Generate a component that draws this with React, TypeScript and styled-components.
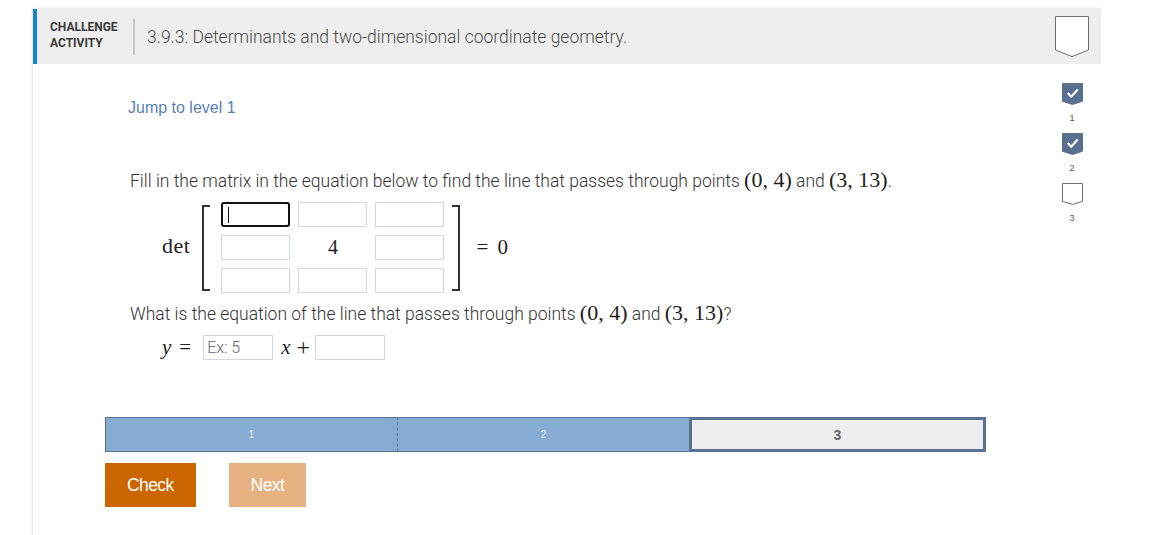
import React from "react";
import styled, { createGlobalStyle } from "styled-components";

const GlobalStyle = createGlobalStyle`
  html, body {
    margin: 0;
    padding: 0;
    background: #fff;
    font-family: Roboto, "Liberation Sans", sans-serif;
  }
`;

const Page = styled.div`
  padding: 9px 0 0 33px;
  width: 1068px;
  height: 526px;
  overflow: hidden;
`;

const Card = styled.div`
  background: #fff;
  box-shadow: 0 0 3px rgba(0, 0, 0, 0.18);
  min-height: 540px;
`;

const Header = styled.div`
  display: flex;
  align-items: center;
  height: 55px;
  background: #eeeeee;
  border-left: 4px solid #1784d0;
  padding-right: 12px;
`;

const Label = styled.div`
  font-family: Roboto, sans-serif;
  font-weight: 700;
  font-size: 12px;
  line-height: 16px;
  color: #3a3a3a;
  padding: 0 13px 4px;
  width: 70px;
  text-transform: uppercase;
`;

const Divider = styled.div`
  width: 2px;
  height: 36px;
  background: #c6c6c6;
`;

const Title = styled.div`
  flex: 1;
  font-weight: 300;
  font-size: 17.5px;
  color: #4a4a4a;
  padding-left: 12px;
`;

const Body = styled.div`
  display: flex;
`;

const Main = styled.div`
  flex: 1;
  padding-left: 72px;
`;

const Side = styled.div`
  width: 58px;
  display: flex;
  flex-direction: column;
  align-items: center;
  padding-top: 19px;
`;

const LevelItem = styled.div`
  display: flex;
  flex-direction: column;
  align-items: center;
  height: 50px;
`;

const LevelNum = styled.span`
  font-family: "Liberation Sans", Arial, sans-serif;
  font-size: 9px;
  color: #555;
  margin-top: 8px;
`;

const JumpLink = styled.div`
  font-family: "Liberation Sans", Arial, sans-serif;
  font-size: 16px;
  color: #5b7fb5;
  margin: 35px 0 0 23px;
`;

const Question = styled.p`
  font-weight: 300;
  font-size: 17.5px;
  line-height: 24px;
  color: #333;
  margin: 51px 0 0 25px;
`;

const Math = styled.span<{ $size?: number }>`
  font-family: "Liberation Serif", "DejaVu Serif", serif;
  font-size: ${(p) => p.$size ?? 22}px;
  color: #222;
`;

const MatrixRow = styled.div`
  display: flex;
  align-items: center;
  margin: 9px 0 0 57px;
`;

const Det = styled(Math)`
  margin-right: 12px;
  margin-top: -4px;
  letter-spacing: 0.5px;
`;

const Bracket = styled.div<{ $side: "left" | "right" }>`
  width: 6px;
  height: 82px;
  border: 2px solid #333;
  ${(p) => (p.$side === "left" ? "border-right: none;" : "border-left: none;")}
`;

const Grid = styled.div`
  display: grid;
  grid-template-columns: repeat(3, 69px);
  grid-auto-rows: 25px;
  column-gap: 8px;
  row-gap: 8px;
  margin: 0 8px 0 11px;
`;

const Cell = styled.div<{ $focus?: boolean }>`
  box-sizing: border-box;
  border: ${(p) => (p.$focus ? "2px solid #111" : "1px solid #cfd8de")};
  border-radius: ${(p) => (p.$focus ? "3px" : "0")};
  position: relative;
`;

const Caret = styled.span`
  position: absolute;
  left: 5px;
  top: 3px;
  width: 1px;
  height: 16px;
  background: #111;
`;

const Fixed = styled(Math)`
  display: flex;
  align-items: center;
  justify-content: center;
  font-size: 20px;
`;

const Equals = styled(Math)`
  margin-left: 16px;
  font-size: 21px;
  word-spacing: 4px;
`;

const Question2 = styled(Question)`
  margin-top: 8px;
`;

const AnswerRow = styled.div`
  display: flex;
  align-items: center;
  margin: 8px 0 0 57px;
`;

const Answer = styled.div`
  box-sizing: border-box;
  width: 70px;
  height: 25px;
  border: 1px solid #cfd8de;
  font-weight: 300;
  font-size: 16px;
  color: #666;
  padding: 2px 0 0 3px;
`;

const Op = styled(Math)<{ $l: number; $r: number }>`
  margin: 0 ${(p) => p.$r}px 0 ${(p) => p.$l}px;
`;

const OpVar = styled(Op)`
  font-style: italic;
`;

const Progress = styled.div`
  display: flex;
  width: 881px;
  height: 35px;
  margin-top: 56px;
`;

const Segment = styled.div<{ $done?: boolean; $first?: boolean }>`
  box-sizing: border-box;
  flex: 1;
  display: flex;
  align-items: center;
  justify-content: center;
  background: ${(p) => (p.$done ? "#87acd3" : "#eeeeee")};
  border: ${(p) => (p.$done ? "1px solid #5a7194" : "3px solid #5a7194")};
  border-left: ${(p) =>
    p.$done ? (p.$first ? "1px solid #5a7194" : "1px dashed #5a7194") : "3px solid #5a7194"};
  font-family: "Liberation Sans", Arial, sans-serif;
  font-size: ${(p) => (p.$done ? "10px" : "14px")};
  font-weight: ${(p) => (p.$done ? 400 : 700)};
  color: ${(p) => (p.$done ? "#e8eef6" : "#666")};
  ${(p) => (p.$done ? "border-right: none;" : "")}
`;

const Buttons = styled.div`
  display: flex;
  gap: 33px;
  margin-top: 11px;
`;

const Button = styled.div<{ $disabled?: boolean }>`
  height: 44px;
  padding: 0 22px;
  display: flex;
  align-items: center;
  background: ${(p) => (p.$disabled ? "#e6b281" : "#cc6600")};
  color: #fff;
  font-family: "Liberation Sans", Arial, sans-serif;
  font-size: 17.5px;
  letter-spacing: -0.6px;
`;

const Shield = ({ w, h, filled }: { w: number; h: number; filled?: boolean }) => (
  <svg width={w} height={h} viewBox={`0 0 ${w} ${h}`}>
    <path
      d={`M0.5 0.5 H${w - 0.5} V${h - h * 0.17} L${w / 2} ${h - 0.5} L0.5 ${h - h * 0.17} Z`}
      fill={filled ? "#596f90" : "#fff"}
      stroke={filled ? "#596f90" : "#6f6f6f"}
      strokeWidth={1}
    />
    {filled && (
      <path
        d={`M${w * 0.27} ${h * 0.45} L${w * 0.44} ${h * 0.62} L${w * 0.75} ${h * 0.3}`}
        fill="none"
        stroke="#fff"
        strokeWidth={2.2}
      />
    )}
  </svg>
);

const levels = [
  { n: 1, done: true },
  { n: 2, done: true },
  { n: 3, done: false },
];

export default function App() {
  return (
    <Page>
      <GlobalStyle />
      <Card>
        <Header>
          <Label>
            Challenge
            <br />
            Activity
          </Label>
          <Divider />
          <Title>3.9.3: Determinants and two-dimensional coordinate geometry.</Title>
          <Shield w={34} h={41} />
        </Header>
        <Body>
          <Main>
            <JumpLink>Jump to level 1</JumpLink>
            <Question>
              Fill in the matrix in the equation below to find the line that passes through points{" "}
              <Math>(0, 4)</Math> and <Math>(3, 13)</Math>.
            </Question>
            <MatrixRow>
              <Det>det</Det>
              <Bracket $side="left" />
              <Grid>
                <Cell $focus>
                  <Caret />
                </Cell>
                <Cell />
                <Cell />
                <Cell />
                <Fixed>4</Fixed>
                <Cell />
                <Cell />
                <Cell />
                <Cell />
              </Grid>
              <Bracket $side="right" />
              <Equals>= 0</Equals>
            </MatrixRow>
            <Question2>
              What is the equation of the line that passes through points <Math>(0, 4)</Math> and{" "}
              <Math>(3, 13)</Math>?
            </Question2>
            <AnswerRow>
              <OpVar $size={21} $l={0} $r={0}>y</OpVar>
              <Op $size={21} $l={8} $r={12}>=</Op>
              <Answer>Ex: 5</Answer>
              <OpVar $size={21} $l={8} $r={6}>x</OpVar>
              <Op $size={24} $l={0} $r={5}>+</Op>
              <Answer />
            </AnswerRow>
            <Progress>
              <Segment $done $first>1</Segment>
              <Segment $done>2</Segment>
              <Segment>3</Segment>
            </Progress>
            <Buttons>
              <Button>Check</Button>
              <Button $disabled>Next</Button>
            </Buttons>
          </Main>
          <Side>
            {levels.map((l) => (
              <LevelItem key={l.n}>
                <Shield w={21} h={22} filled={l.done} />
                <LevelNum>{l.n}</LevelNum>
              </LevelItem>
            ))}
          </Side>
        </Body>
      </Card>
    </Page>
  );
}
